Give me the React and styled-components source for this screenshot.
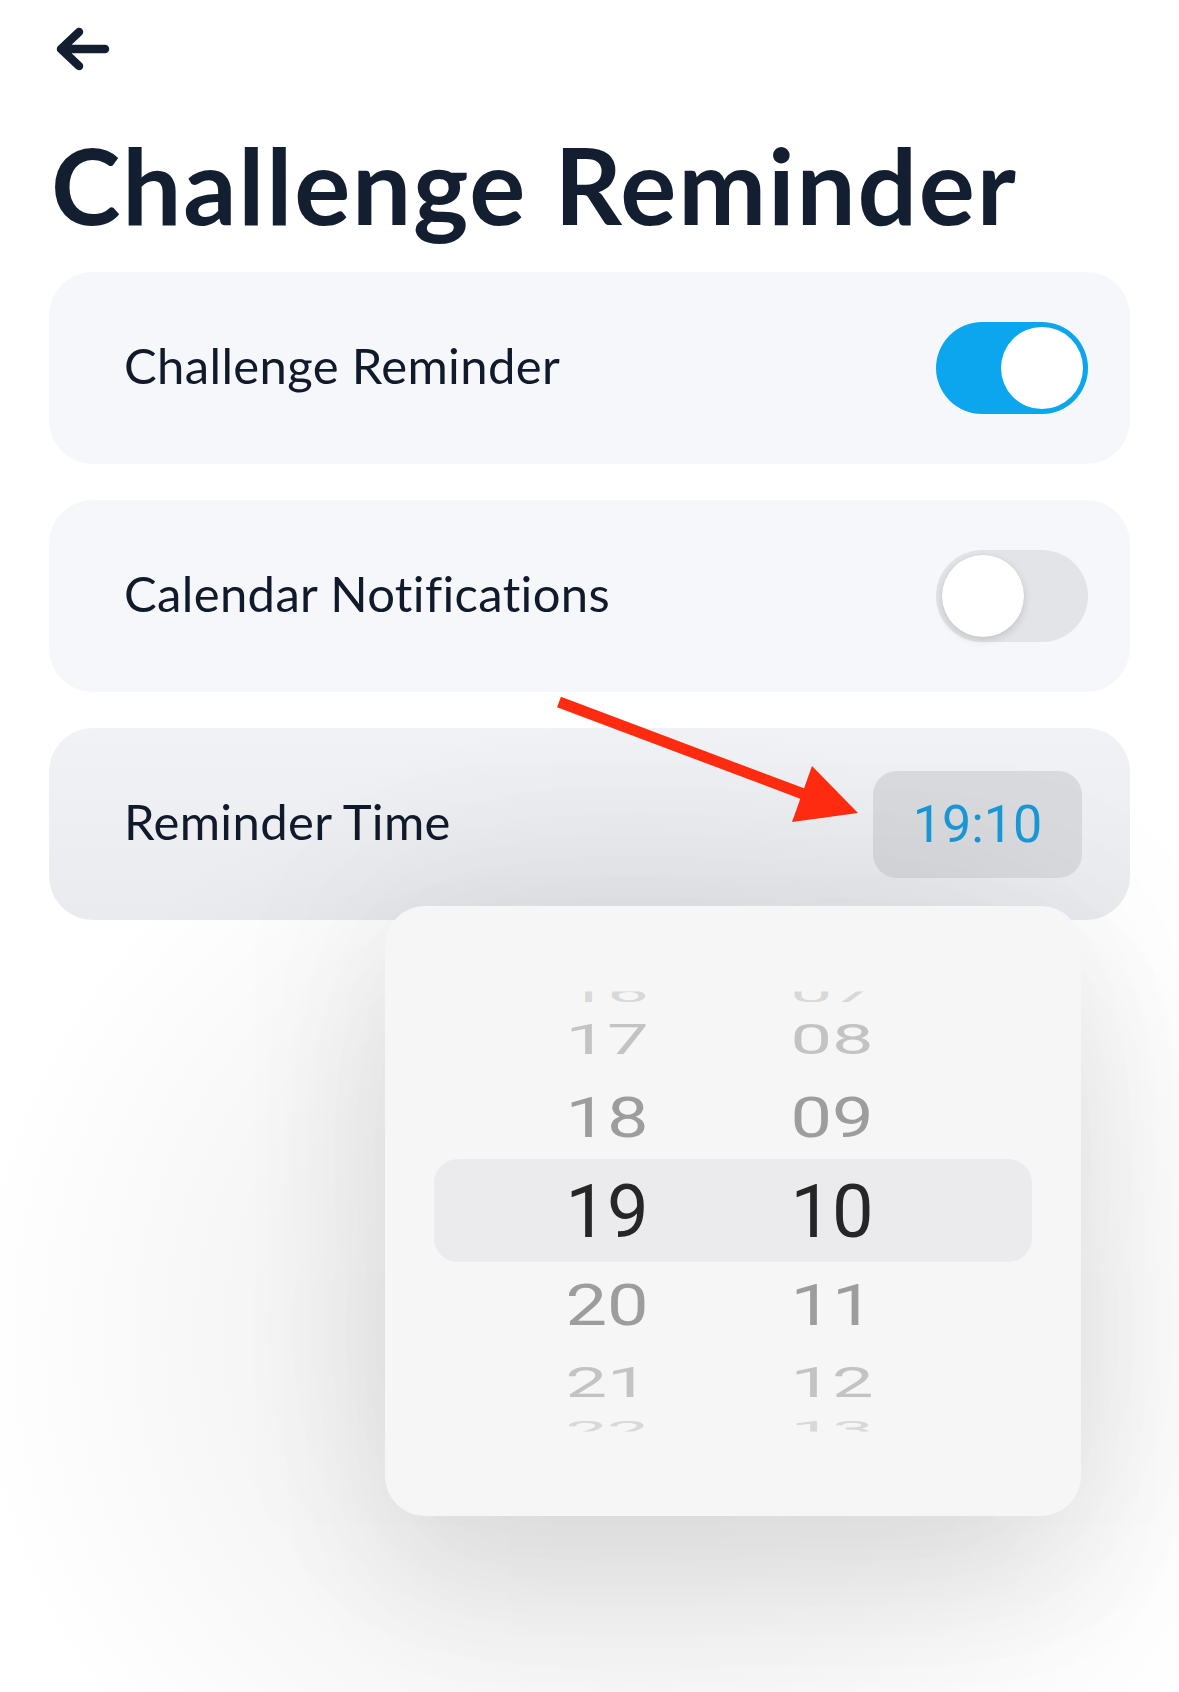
import React from 'react'
import styled, { createGlobalStyle } from 'styled-components'

const GlobalStyle = createGlobalStyle`
    html, body {
        margin: 0;
        padding: 0;
        background: #ffffff;
    }
    * {
        box-sizing: border-box;
    }
`;

const Page = styled.div`
    position: relative;
    width: 1179px;
    min-height: 1692px;
    padding: 24px 49px 0;
    overflow: hidden;
    background: #ffffff;
    font-family: 'Lato', 'Noto Sans', sans-serif;
`;

const Header = styled.div`
    display: flex;
    align-items: center;
    height: 50px;
    margin-left: 1px;
`;

const BackButton = styled.button`
    display: flex;
    padding: 0;
    border: none;
    background: none;
    cursor: pointer;
`;

const Title = styled.h1`
    margin: 58px 0 0 2px;
    font-size: 105px;
    line-height: 1;
    font-weight: 700;
    color: #131f30;
    letter-spacing: 1.8px;
`;

const List = styled.div`
    display: flex;
    flex-direction: column;
    gap: 36px;
    margin-top: 35px;
`;

const Card = styled.div`
    display: flex;
    align-items: center;
    justify-content: space-between;
    height: 192px;
    padding: 0 42px 6px 75px;
    border-radius: 44px;
    background: ${p => p.$dim ? 'linear-gradient(180deg, #f0f2f5, #eaebee)' : '#f5f7fa'};
`;

const Label = styled.span`
    font-size: 49px;
    color: #111a2b;
    letter-spacing: 0.35px;
`;

const Switch = styled.div`
    position: relative;
    width: 152px;
    height: 92px;
    border-radius: 46px;
    background: ${p => p.$on ? '#0ba6ed' : '#e3e4e8'};
    margin-top: 6px;
`;

const Knob = styled.div`
    position: absolute;
    top: 5px;
    left: ${p => p.$on ? '65px' : '6px'};
    width: 82px;
    height: 82px;
    border-radius: 50%;
    background: #ffffff;
    box-shadow: ${p => p.$on ? 'none' : '0 3px 8px rgba(0, 0, 0, 0.14), 0 0 1px rgba(0,0,0,0.1)'};
`;

const TimeWrap = styled.div`
    position: relative;
`;

const TimePill = styled.div`
    display: flex;
    align-items: center;
    justify-content: center;
    width: 209px;
    height: 107px;
    margin: 6px 6px 0 0;
    border-radius: 24px;
    background: #d9dadd;
    color: #1a98d6;
    font-family: 'Roboto', 'Liberation Sans', sans-serif;
    font-size: 52px;
`;

/* soft haze that the open picker casts over the page */
const PickerHalo = styled.div`
    position: absolute;
    top: -42px;
    left: -84px;
    width: 1336px;
    height: 1250px;
    z-index: 1;
    pointer-events: none;
    background: radial-gradient(ellipse 50% 50% at 50% 52%, rgba(0, 0, 0, 0.065) 0%, rgba(0, 0, 0, 0.04) 55%, rgba(0, 0, 0, 0) 100%);
`;

const Picker = styled.div`
    position: absolute;
    top: 178px;
    left: 336px;
    z-index: 1;
    width: 696px;
    height: 610px;
    border-radius: 40px;
    background: #f6f6f6;
    box-shadow: 0 70px 130px rgba(0, 0, 0, 0.07), 0 0 200px rgba(0, 0, 0, 0.07);
`;

const Band = styled.div`
    position: absolute;
    top: 253px;
    left: 49px;
    right: 49px;
    height: 103px;
    border-radius: 24px;
    background: #ebebed;
`;

const Wheel = styled.div`
    position: relative;
    display: flex;
    gap: 75px;
    padding: 76px 0 0 147px;
    font-family: 'Roboto', 'Liberation Sans', sans-serif;
`;

const WheelColumn = styled.div`
    display: flex;
    flex-direction: column;
    width: 150px;
`;

const clips = {
    top: 'inset(22% 0 -300% 0)',
    bottom: 'inset(-300% 0 22% 0)',
    none: 'none',
};

const WheelItem = styled.div`
    display: flex;
    align-items: center;
    justify-content: center;
    height: ${p => p.$h}px;
    font-size: 74px;
    line-height: ${p => p.$h}px;
    color: ${p => p.$color};

    span {
        display: inline-block;
        transform: scaleY(${p => p.$scale});
        clip-path: ${p => clips[p.$clip]};
    }
`;

const Annotation = styled.svg`
    position: absolute;
    left: 540px;
    top: 690px;
    z-index: 2;
    pointer-events: none;
`;

const rows = [
    { h: 23, scale: 0.32, color: '#d8d8d8', clip: 'top' },
    { h: 70, scale: 0.57, color: '#c3c3c3', clip: 'none' },
    { h: 85, scale: 0.76, color: '#9d9d9d', clip: 'none' },
    { h: 103, scale: 1, color: '#262626', clip: 'none' },
    { h: 85, scale: 0.78, color: '#9d9d9d', clip: 'none' },
    { h: 70, scale: 0.57, color: '#c3c3c3', clip: 'none' },
    { h: 23, scale: 0.32, color: '#d8d8d8', clip: 'bottom' },
];

const hours = ['16', '17', '18', '19', '20', '21', '22'];
const minutes = ['07', '08', '09', '10', '11', '12', '13'];

function Column({ values }) {
    return (
        <WheelColumn>
            {values.map((v, i) => (
                <WheelItem key={v} $h={rows[i].h} $scale={rows[i].scale} $color={rows[i].color} $clip={rows[i].clip}>
                    <span>{v}</span>
                </WheelItem>
            ))}
        </WheelColumn>
    )
}

export default function App() {
    return (
        <Page>
            <GlobalStyle />
            <Header>
                <BackButton aria-label="Back">
                    <svg width="64" height="50" viewBox="0 0 64 50" fill="none">
                        <path d="M55 25H11M29 8L11 25L29 42" stroke="#131f30" strokeWidth="8.5" strokeLinecap="round" strokeLinejoin="round" />
                    </svg>
                </BackButton>
            </Header>
            <Title>Challenge Reminder</Title>
            <List>
                <Card>
                    <Label>Challenge Reminder</Label>
                    <Switch $on><Knob $on /></Switch>
                </Card>
                <Card>
                    <Label>Calendar Notifications</Label>
                    <Switch><Knob /></Switch>
                </Card>
                <TimeWrap>
                    <Card $dim>
                        <Label>Reminder Time</Label>
                        <TimePill>19:10</TimePill>
                    </Card>
                    <PickerHalo />
                    <Picker>
                        <Band />
                        <Wheel>
                            <Column values={hours} />
                            <Column values={minutes} />
                        </Wheel>
                    </Picker>
                </TimeWrap>
            </List>
            <Annotation width="340" height="150" viewBox="0 0 340 150">
                <line x1="19" y1="12" x2="266" y2="105" stroke="#ff2b10" strokeWidth="11" />
                <polygon points="318,123 272,76 252,132" fill="#ff2b10" />
            </Annotation>
        </Page>
    )
}
